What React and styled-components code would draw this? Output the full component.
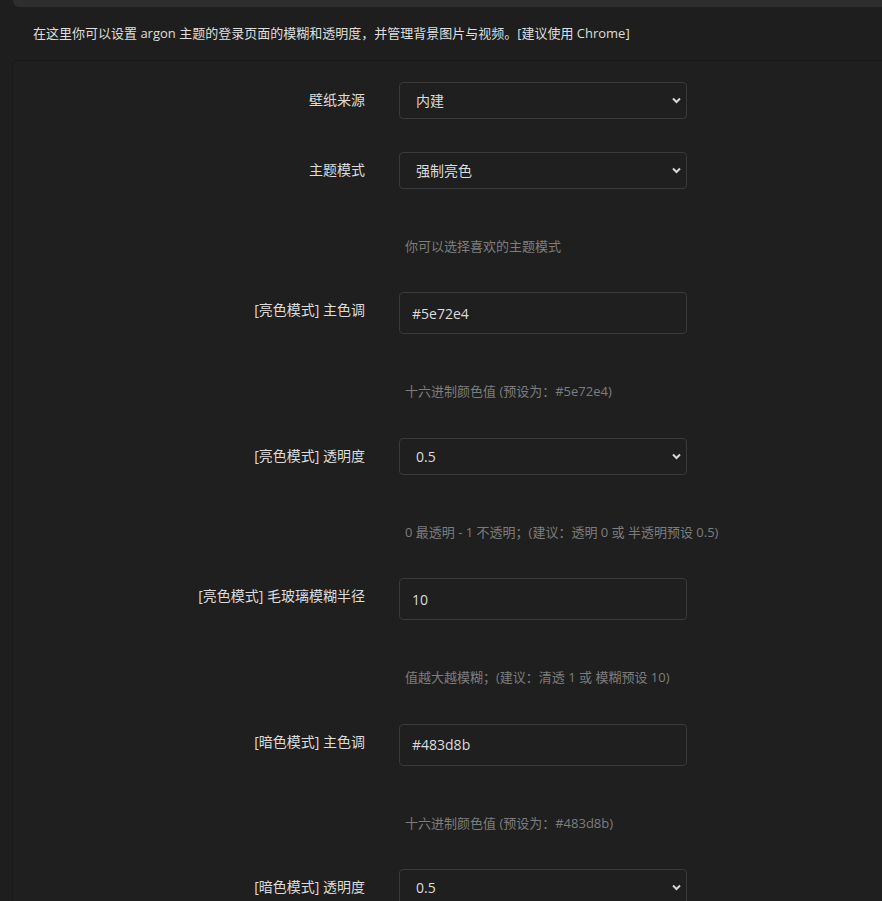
import React from "react"
import styled, { createGlobalStyle } from "styled-components"

const GlobalStyle = createGlobalStyle`
    html, body {
        margin:0;
        padding:0;
        background:#1e1e1e;
    }
    body{
        font-family:"Open Sans","Noto Sans CJK SC",sans-serif;
        font-size:13px;
        color:#dcdcdc;
    }
`

const Page = styled.div`
    min-height:901px;
    overflow:hidden;
`

const TopBar = styled.div`
    margin-left:13px;
    height:7px;
    background:#2e2e2e;
    border-bottom-left-radius:6px;
`

const Intro = styled.p`
    margin:16px 0 0 33px;
    line-height:20px;
    font-size:13px;
    color:#dedede;
`

const Panel = styled.section`
    margin:18px 0 0 13px;
    padding-top:5px;
    background:#1f1f1f;
    box-shadow:0 -1px 0 #171717, -1px 0 0 #191919;
    border-top-left-radius:4px;
`

const Row = styled.div`
    display:flex;
    align-items:flex-start;
    padding:16px 0 17px;
`

const Label = styled.label`
    width:352px;
    flex-shrink:0;
    text-align:right;
    padding-top:9px;
    line-height:18px;
    font-size:14px;
    color:#dcdcdc;
    margin-right:34px;
`

const DescRow = styled.div`
    padding:30px 0 20.4px 392px;
    line-height:20px;
    height:20px;
    color:#7d7d7d;
`

const Field = styled.div`
    position:relative;
    width:288px;
`

const Select = styled.select`
    appearance:none;
    display:block;
    width:100%;
    height:37px;
    box-sizing:border-box;
    background:#1f1f1f;
    border:1px solid #3a3a3a;
    border-radius:4px;
    color:#dcdcdc;
    font:inherit;
    font-size:14px;
    padding:0 30px 0 16px;
    outline:none;
`

const Chevron = styled.svg`
    position:absolute;
    right:6px;
    top:15px;
    width:9px;
    height:7px;
    pointer-events:none;
`

const Input = styled.input`
    display:block;
    width:100%;
    height:42px;
    box-sizing:border-box;
    background:#1f1f1f;
    border:1px solid #3a3a3a;
    border-radius:4px;
    color:#dcdcdc;
    font:inherit;
    font-size:14px;
    padding:0 12px;
    outline:none;
`

const fields = [
    { label: "壁纸来源", type: "select", value: "内建" },
    { label: "主题模式", type: "select", value: "强制亮色", desc: "你可以选择喜欢的主题模式" },
    { label: "[亮色模式] 主色调", type: "input", value: "#5e72e4", desc: "十六进制颜色值 (预设为：#5e72e4)" },
    { label: "[亮色模式] 透明度", type: "select", value: "0.5", desc: "0 最透明 - 1 不透明；(建议：透明 0 或 半透明预设 0.5)" },
    { label: "[亮色模式] 毛玻璃模糊半径", type: "input", value: "10", desc: "值越大越模糊；(建议：清透 1 或 模糊预设 10)" },
    { label: "[暗色模式] 主色调", type: "input", value: "#483d8b", desc: "十六进制颜色值 (预设为：#483d8b)" },
    { label: "[暗色模式] 透明度", type: "select", value: "0.5" },
]

function Control({ type, value }) {
    if (type === "select") {
        return (
            <Field>
                <Select defaultValue={value}>
                    <option>{value}</option>
                </Select>
                <Chevron viewBox="0 0 9 7">
                    <path d="M1 1.5 L4.5 5 L8 1.5" fill="none" stroke="#d6d6d6" strokeWidth="2" />
                </Chevron>
            </Field>
        )
    }
    return (
        <Field>
            <Input defaultValue={value} />
        </Field>
    )
}

export default function App() {
    return (
        <Page>
            <GlobalStyle />
            <TopBar />
            <Intro>在这里你可以设置 argon 主题的登录页面的模糊和透明度，并管理背景图片与视频。[建议使用 Chrome]</Intro>
            <Panel>
                {fields.map((f, i) => (
                    <React.Fragment key={i}>
                        <Row>
                            <Label>{f.label}</Label>
                            <Control type={f.type} value={f.value} />
                        </Row>
                        {f.desc && <DescRow>{f.desc}</DescRow>}
                    </React.Fragment>
                ))}
            </Panel>
        </Page>
    )
}
